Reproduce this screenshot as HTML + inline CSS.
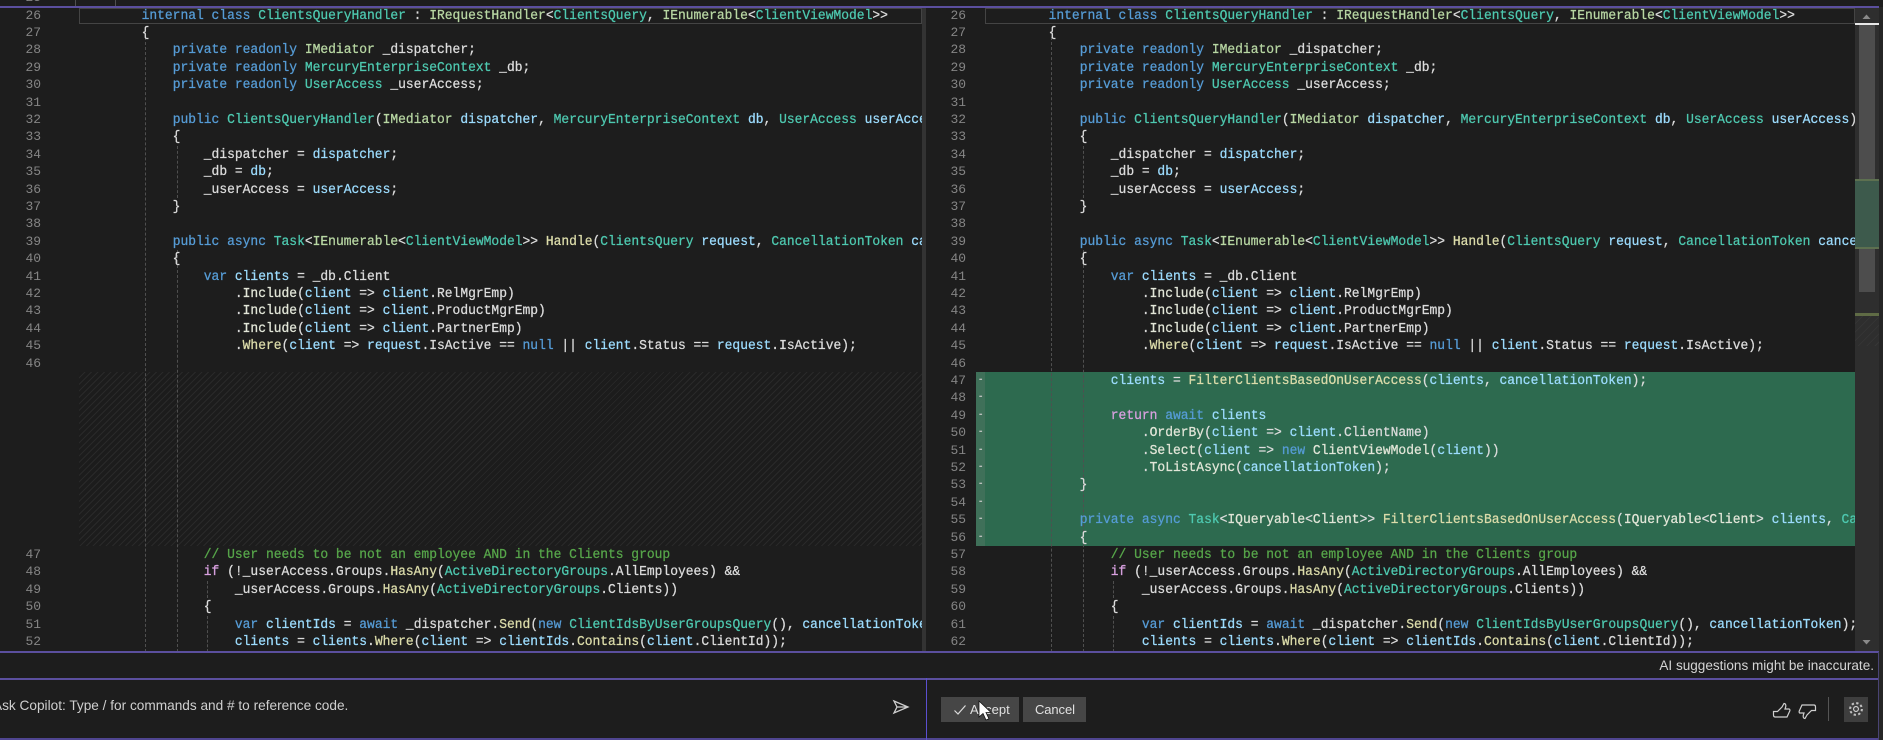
<!DOCTYPE html>
<html><head><meta charset="utf-8"><style>
html,body{margin:0;padding:0;background:#1d1d1d;width:1883px;height:740px;overflow:hidden}
*{box-sizing:border-box}
.a{position:absolute}
.pane{position:absolute;top:0;height:652px;overflow:hidden;font:12.96px/17.4px "Liberation Mono",monospace;color:#dcdcdc;font-weight:400;-webkit-text-stroke:.25px}
.r{position:absolute;left:0;right:0;height:17.4px;white-space:pre;top:calc(6.5px + 17.4px * var(--i))}
.r s{position:absolute;text-decoration:none;top:0;width:24px;text-align:right;color:#858585;-webkit-text-stroke:0}
#L .r s{left:17px}#R .r s{left:16px}
code{transform:scaleY(1.07);transform-origin:left center}
#L code{position:absolute;left:110.5px;font:inherit}#R code{position:absolute;left:91.5px;font:inherit}
.k{color:#569cd6}.t{color:#4ec9b0}.n{color:#b8d7a3}.m{color:#dcdcaa}.v{color:#9cdcfe}.c{color:#57a64a}.f{color:#d8a0df}.p{color:#a8a8a8}
.w{color:#e2e6d8}
.g{position:absolute;width:0;border-left:1px dashed #4f4f4f}
.hl{position:absolute;border:1px solid #444;top:8px;height:16px}
.h{background:#1c1c1c repeating-linear-gradient(135deg,#1c1c1c 0,#1c1c1c 3.6px,#292929 3.6px,#292929 4.6px)}
.ui{font:13px/1 "Liberation Sans",sans-serif;color:#d0d0d0;white-space:pre}
.btn{position:absolute;top:697px;height:25px;background:#464646}
</style></head><body>

<!-- left pane -->
<div class="pane" id="L" style="left:0;width:922px">
<div class="a h" style="left:79px;top:372px;width:843px;height:174px"></div>
<div class="hl" style="left:79px;width:843px"></div>
<div class="g" style="left:75px;top:0;height:6px"></div><div class="g" style="left:115px;top:0;height:6px"></div>
<div class="g" style="left:145px;top:37px;height:615px"></div>
<div class="g" style="left:177px;top:146px;height:52px"></div>
<div class="g" style="left:177px;top:250px;height:402px"></div>
<div class="g" style="left:207px;top:581px;height:17px"></div>
<div class="g" style="left:207px;top:616px;height:36px"></div>
<div class="r" style="--i:-1"><s>25</s></div>
<div class="r" style="--i:0"><s>26</s><code>    <span class="k">internal class</span> <span class="t">ClientsQueryHandler</span> : <span class="n">IRequestHandler</span>&lt;<span class="t">ClientsQuery</span>, <span class="n">IEnumerable</span>&lt;<span class="t">ClientViewModel</span>&gt;&gt;</code></div>
<div class="r" style="--i:1"><s>27</s><code>    {</code></div>
<div class="r" style="--i:2"><s>28</s><code>        <span class="k">private readonly</span> <span class="n">IMediator</span> _dispatcher;</code></div>
<div class="r" style="--i:3"><s>29</s><code>        <span class="k">private readonly</span> <span class="t">MercuryEnterpriseContext</span> _db;</code></div>
<div class="r" style="--i:4"><s>30</s><code>        <span class="k">private readonly</span> <span class="t">UserAccess</span> _userAccess;</code></div>
<div class="r" style="--i:5"><s>31</s></div>
<div class="r" style="--i:6"><s>32</s><code>        <span class="k">public</span> <span class="t">ClientsQueryHandler</span>(<span class="n">IMediator</span> <span class="v">dispatcher</span>, <span class="t">MercuryEnterpriseContext</span> <span class="v">db</span>, <span class="t">UserAccess</span> <span class="v">userAccess</span>)</code></div>
<div class="r" style="--i:7"><s>33</s><code>        {</code></div>
<div class="r" style="--i:8"><s>34</s><code>            _dispatcher = <span class="v">dispatcher</span>;</code></div>
<div class="r" style="--i:9"><s>35</s><code>            _db = <span class="v">db</span>;</code></div>
<div class="r" style="--i:10"><s>36</s><code>            _userAccess = <span class="v">userAccess</span>;</code></div>
<div class="r" style="--i:11"><s>37</s><code>        }</code></div>
<div class="r" style="--i:12"><s>38</s></div>
<div class="r" style="--i:13"><s>39</s><code>        <span class="k">public async</span> <span class="t">Task</span>&lt;<span class="n">IEnumerable</span>&lt;<span class="t">ClientViewModel</span>&gt;&gt; <span class="m">Handle</span>(<span class="t">ClientsQuery</span> <span class="v">request</span>, <span class="t">CancellationToken</span> <span class="v">cancellationToken</span>)</code></div>
<div class="r" style="--i:14"><s>40</s><code>        {</code></div>
<div class="r" style="--i:15"><s>41</s><code>            <span class="k">var</span> <span class="v">clients</span> = _db.Client</code></div>
<div class="r" style="--i:16"><s>42</s><code>                .<span class="w">Include</span>(<span class="v">client</span> =&gt; <span class="v">client</span>.RelMgrEmp)</code></div>
<div class="r" style="--i:17"><s>43</s><code>                .<span class="w">Include</span>(<span class="v">client</span> =&gt; <span class="v">client</span>.ProductMgrEmp)</code></div>
<div class="r" style="--i:18"><s>44</s><code>                .<span class="w">Include</span>(<span class="v">client</span> =&gt; <span class="v">client</span>.PartnerEmp)</code></div>
<div class="r" style="--i:19"><s>45</s><code>                .<span class="m">Where</span>(<span class="v">client</span> =&gt; <span class="v">request</span>.IsActive == <span class="k">null</span> || <span class="v">client</span>.Status == <span class="v">request</span>.IsActive);</code></div>
<div class="r" style="--i:20"><s>46</s></div>
<div class="r" style="--i:31"><s>47</s><code>            <span class="c">// User needs to be not an employee AND in the Clients group</span></code></div>
<div class="r" style="--i:32"><s>48</s><code>            <span class="f">if</span> (!_userAccess.Groups.<span class="m">HasAny</span>(<span class="t">ActiveDirectoryGroups</span>.AllEmployees) &amp;&amp;</code></div>
<div class="r" style="--i:33"><s>49</s><code>                _userAccess.Groups.<span class="m">HasAny</span>(<span class="t">ActiveDirectoryGroups</span>.Clients))</code></div>
<div class="r" style="--i:34"><s>50</s><code>            {</code></div>
<div class="r" style="--i:35"><s>51</s><code>                <span class="k">var</span> <span class="v">clientIds</span> = <span class="k">await</span> _dispatcher.<span class="m">Send</span>(<span class="k">new</span> <span class="t">ClientIdsByUserGroupsQuery</span>(), <span class="v">cancellationToken</span>);</code></div>
<div class="r" style="--i:36"><s>52</s><code>                <span class="v">clients</span> = <span class="v">clients</span>.<span class="m">Where</span>(<span class="v">client</span> =&gt; <span class="v">clientIds</span>.<span class="m">Contains</span>(<span class="v">client</span>.ClientId));</code></div>
</div>

<div class="a" style="left:922px;top:7px;width:4px;height:645px;background:#333"></div>

<!-- right pane -->
<div class="pane" id="R" style="left:926px;width:929px">
<div class="a" style="left:50px;top:372px;width:9px;height:174px;background:#3f7059"></div>
<div class="a" style="left:59px;top:372px;width:870px;height:174px;background:#2d6a4f"></div>
<div class="hl" style="left:59px;width:870px"></div>
<div class="g" style="left:125px;top:37px;height:615px"></div>
<div class="g" style="left:157px;top:146px;height:52px"></div>
<div class="g" style="left:157px;top:250px;height:402px"></div>
<div class="g" style="left:187px;top:581px;height:17px"></div>
<div class="g" style="left:187px;top:616px;height:36px"></div>
<div class="r" style="--i:0"><s>26</s><code>    <span class="k">internal class</span> <span class="t">ClientsQueryHandler</span> : <span class="n">IRequestHandler</span>&lt;<span class="t">ClientsQuery</span>, <span class="n">IEnumerable</span>&lt;<span class="t">ClientViewModel</span>&gt;&gt;</code></div>
<div class="r" style="--i:1"><s>27</s><code>    {</code></div>
<div class="r" style="--i:2"><s>28</s><code>        <span class="k">private readonly</span> <span class="n">IMediator</span> _dispatcher;</code></div>
<div class="r" style="--i:3"><s>29</s><code>        <span class="k">private readonly</span> <span class="t">MercuryEnterpriseContext</span> _db;</code></div>
<div class="r" style="--i:4"><s>30</s><code>        <span class="k">private readonly</span> <span class="t">UserAccess</span> _userAccess;</code></div>
<div class="r" style="--i:5"><s>31</s></div>
<div class="r" style="--i:6"><s>32</s><code>        <span class="k">public</span> <span class="t">ClientsQueryHandler</span>(<span class="n">IMediator</span> <span class="v">dispatcher</span>, <span class="t">MercuryEnterpriseContext</span> <span class="v">db</span>, <span class="t">UserAccess</span> <span class="v">userAccess</span>)</code></div>
<div class="r" style="--i:7"><s>33</s><code>        {</code></div>
<div class="r" style="--i:8"><s>34</s><code>            _dispatcher = <span class="v">dispatcher</span>;</code></div>
<div class="r" style="--i:9"><s>35</s><code>            _db = <span class="v">db</span>;</code></div>
<div class="r" style="--i:10"><s>36</s><code>            _userAccess = <span class="v">userAccess</span>;</code></div>
<div class="r" style="--i:11"><s>37</s><code>        }</code></div>
<div class="r" style="--i:12"><s>38</s></div>
<div class="r" style="--i:13"><s>39</s><code>        <span class="k">public async</span> <span class="t">Task</span>&lt;<span class="n">IEnumerable</span>&lt;<span class="t">ClientViewModel</span>&gt;&gt; <span class="m">Handle</span>(<span class="t">ClientsQuery</span> <span class="v">request</span>, <span class="t">CancellationToken</span> <span class="v">cancellationToken</span>)</code></div>
<div class="r" style="--i:14"><s>40</s><code>        {</code></div>
<div class="r" style="--i:15"><s>41</s><code>            <span class="k">var</span> <span class="v">clients</span> = _db.Client</code></div>
<div class="r" style="--i:16"><s>42</s><code>                .<span class="w">Include</span>(<span class="v">client</span> =&gt; <span class="v">client</span>.RelMgrEmp)</code></div>
<div class="r" style="--i:17"><s>43</s><code>                .<span class="w">Include</span>(<span class="v">client</span> =&gt; <span class="v">client</span>.ProductMgrEmp)</code></div>
<div class="r" style="--i:18"><s>44</s><code>                .<span class="w">Include</span>(<span class="v">client</span> =&gt; <span class="v">client</span>.PartnerEmp)</code></div>
<div class="r" style="--i:19"><s>45</s><code>                .<span class="m">Where</span>(<span class="v">client</span> =&gt; <span class="v">request</span>.IsActive == <span class="k">null</span> || <span class="v">client</span>.Status == <span class="v">request</span>.IsActive);</code></div>
<div class="r" style="--i:20"><s>46</s></div>
<div class="r" style="--i:21"><s>47</s><span class="a" style="left:52px;top:0;color:#cfcfcf;font-size:9px">-</span><code>            <span class="v">clients</span> = <span class="m">FilterClientsBasedOnUserAccess</span>(<span class="v">clients</span>, <span class="v">cancellationToken</span>);</code></div>
<div class="r" style="--i:22"><s>48</s><span class="a" style="left:52px;top:0;color:#cfcfcf;font-size:9px">-</span></div>
<div class="r" style="--i:23"><s>49</s><span class="a" style="left:52px;top:0;color:#cfcfcf;font-size:9px">-</span><code>            <span class="f">return</span> <span class="k">await</span> <span class="v">clients</span></code></div>
<div class="r" style="--i:24"><s>50</s><span class="a" style="left:52px;top:0;color:#cfcfcf;font-size:9px">-</span><code>                .<span class="w">OrderBy</span>(<span class="v">client</span> =&gt; <span class="v">client</span>.ClientName)</code></div>
<div class="r" style="--i:25"><s>51</s><span class="a" style="left:52px;top:0;color:#cfcfcf;font-size:9px">-</span><code>                .<span class="w">Select</span>(<span class="v">client</span> =&gt; <span class="k">new</span> <span class="w">ClientViewModel</span>(<span class="v">client</span>))</code></div>
<div class="r" style="--i:26"><s>52</s><span class="a" style="left:52px;top:0;color:#cfcfcf;font-size:9px">-</span><code>                .<span class="w">ToListAsync</span>(<span class="v">cancellationToken</span>);</code></div>
<div class="r" style="--i:27"><s>53</s><span class="a" style="left:52px;top:0;color:#cfcfcf;font-size:9px">-</span><code>        }</code></div>
<div class="r" style="--i:28"><s>54</s><span class="a" style="left:52px;top:0;color:#cfcfcf;font-size:9px">-</span></div>
<div class="r" style="--i:29"><s>55</s><span class="a" style="left:52px;top:0;color:#cfcfcf;font-size:9px">-</span><code>        <span class="k">private async</span> <span class="t">Task</span>&lt;<span class="w">IQueryable</span>&lt;<span class="w">Client</span>&gt;&gt; <span class="m">FilterClientsBasedOnUserAccess</span>(<span class="w">IQueryable</span>&lt;<span class="w">Client</span>&gt; <span class="v">clients</span>, <span class="t">CancellationToken</span> <span class="v">cancellationToken</span>)</code></div>
<div class="r" style="--i:30"><s>56</s><span class="a" style="left:52px;top:0;color:#cfcfcf;font-size:9px">-</span><code>        {</code></div>
<div class="r" style="--i:31"><s>57</s><code>            <span class="c">// User needs to be not an employee AND in the Clients group</span></code></div>
<div class="r" style="--i:32"><s>58</s><code>            <span class="f">if</span> (!_userAccess.Groups.<span class="m">HasAny</span>(<span class="t">ActiveDirectoryGroups</span>.AllEmployees) &amp;&amp;</code></div>
<div class="r" style="--i:33"><s>59</s><code>                _userAccess.Groups.<span class="m">HasAny</span>(<span class="t">ActiveDirectoryGroups</span>.Clients))</code></div>
<div class="r" style="--i:34"><s>60</s><code>            {</code></div>
<div class="r" style="--i:35"><s>61</s><code>                <span class="k">var</span> <span class="v">clientIds</span> = <span class="k">await</span> _dispatcher.<span class="m">Send</span>(<span class="k">new</span> <span class="t">ClientIdsByUserGroupsQuery</span>(), <span class="v">cancellationToken</span>);</code></div>
<div class="r" style="--i:36"><s>62</s><code>                <span class="v">clients</span> = <span class="v">clients</span>.<span class="m">Where</span>(<span class="v">client</span> =&gt; <span class="v">clientIds</span>.<span class="m">Contains</span>(<span class="v">client</span>.ClientId));</code></div>
</div>

<!-- scrollbar -->
<div class="a" style="left:1855px;top:7px;width:24px;height:645px;background:#2e2e2e"></div>
<div class="a" style="left:1879px;top:7px;width:4px;height:733px;background:#262626"></div>
<div class="a" style="left:1859px;top:25px;width:16px;height:267px;background:#4d4d4d"></div>
<div class="a" style="left:1855px;top:179px;width:24px;height:70px;background:#3d5a4c;border-top:2px solid #5d7050;border-bottom:2px solid #5d7050"></div>
<div class="a" style="left:1855px;top:23px;width:24px;height:2px;background:#e8e8e8"></div>
<div class="a" style="left:1855px;top:313px;width:24px;height:3px;background:#5f6b45"></div>
<div class="a" style="left:1855px;top:316px;width:24px;height:30px;background:repeating-linear-gradient(135deg,#2e2e2e 0,#2e2e2e 5px,#363636 5px,#363636 6px)"></div>
<svg class="a" style="left:1861px;top:13px" width="11" height="7"><path d="M1.5 6 5.5 1.5 9.5 6Z" fill="#8a8a8a"/></svg>
<svg class="a" style="left:1861px;top:639px" width="11" height="7"><path d="M1.5 1 5.5 5.5 9.5 1Z" fill="#8a8a8a"/></svg>

<!-- purple lines -->
<div class="a" style="left:0;top:6px;width:1879px;height:2px;background:#5b4f9e"></div>
<div class="a" style="left:0;top:651px;width:1879px;height:2px;background:#5b4f9e"></div>
<div class="a" style="left:0;top:678px;width:1879px;height:2px;background:#5b4f9e"></div>
<div class="a" style="left:0;top:738px;width:1879px;height:2px;background:#4f4590"></div>
<div class="a" style="left:926px;top:678px;width:1px;height:62px;background:#5b4fd0"></div>
<div class="a" style="left:1878px;top:652px;width:1px;height:88px;background:#4a4475"></div>

<!-- bottom bar -->
<div class="a ui" style="right:9px;top:658.5px;font-size:13.55px;color:#d4d4d4">AI suggestions might be inaccurate.</div>
<div class="a ui" style="left:-7px;top:698.5px;font-size:13.65px;color:#cfcfcf">Ask Copilot: Type / for commands and # to reference code.</div>
<svg class="a" style="left:892px;top:699px" width="18" height="16" fill="none" stroke="#cfcfcf" stroke-width="1.3"><path d="M2 2 16 8 2 14 5 8Z M5 8H16"/></svg>

<div class="btn" style="left:941px;width:78px"></div>
<svg class="a" style="left:953px;top:704px" width="14" height="12" fill="none" stroke="#dcdcdc" stroke-width="1.2"><path d="M1.5 6.5 5 10 12.5 1.5"/></svg>
<div class="a ui" style="left:970px;top:703px;font-size:13px;color:#e0e0e0">Accept</div>
<div class="btn" style="left:1023px;width:63px"></div>
<div class="a ui" style="left:1035px;top:703px;font-size:13px;color:#e0e0e0;letter-spacing:-.1px">Cancel</div>
<svg class="a" style="left:978px;top:700px" width="14" height="22"><path d="M1 1 1 17 5 13.5 8 20 11 18.8 8 12.5 13 12.5Z" fill="#fff" stroke="#111" stroke-width=".8"/></svg>

<svg class="a" style="left:1772px;top:702px" width="19" height="17" fill="none" stroke="#cfcfcf" stroke-width="1.2"><path d="M1.5 9.5H5.5L10 5 12 1.5C13.8 1.5 14.2 3.5 13.5 5.5L13 7H17C18 7 18.2 8.5 17.5 9.5L15 15H3C1.8 15 1.5 14 1.5 13Z"/></svg>
<svg class="a" style="left:1798px;top:703px" width="19" height="17" fill="none" stroke="#cfcfcf" stroke-width="1.2"><path d="M17.5 7.5H13.5L9 12 7 15.5C5.2 15.5 4.8 13.5 5.5 11.5L6 10H2C1 10 .8 8.5 1.5 7.5L4 2H16C17.2 2 17.5 3 17.5 4Z"/></svg>
<div class="a" style="left:1828px;top:697px;width:1px;height:24px;background:#555"></div>
<div class="a" style="left:1844px;top:697px;width:24px;height:25px;background:#3e3e3e"></div>
<svg class="a" style="left:1848px;top:701px" width="16" height="16" fill="none" stroke="#d8d8d8" stroke-width="1.1"><circle cx="8" cy="8" r="2.4"/><circle cx="8" cy="8" r="5.6" stroke-width="2.6" stroke-dasharray="2.2 2.2" opacity=".85"/><circle cx="8" cy="8" r="4.2" stroke="#3e3e3e" stroke-width="1.4"/></svg>
</body></html>
